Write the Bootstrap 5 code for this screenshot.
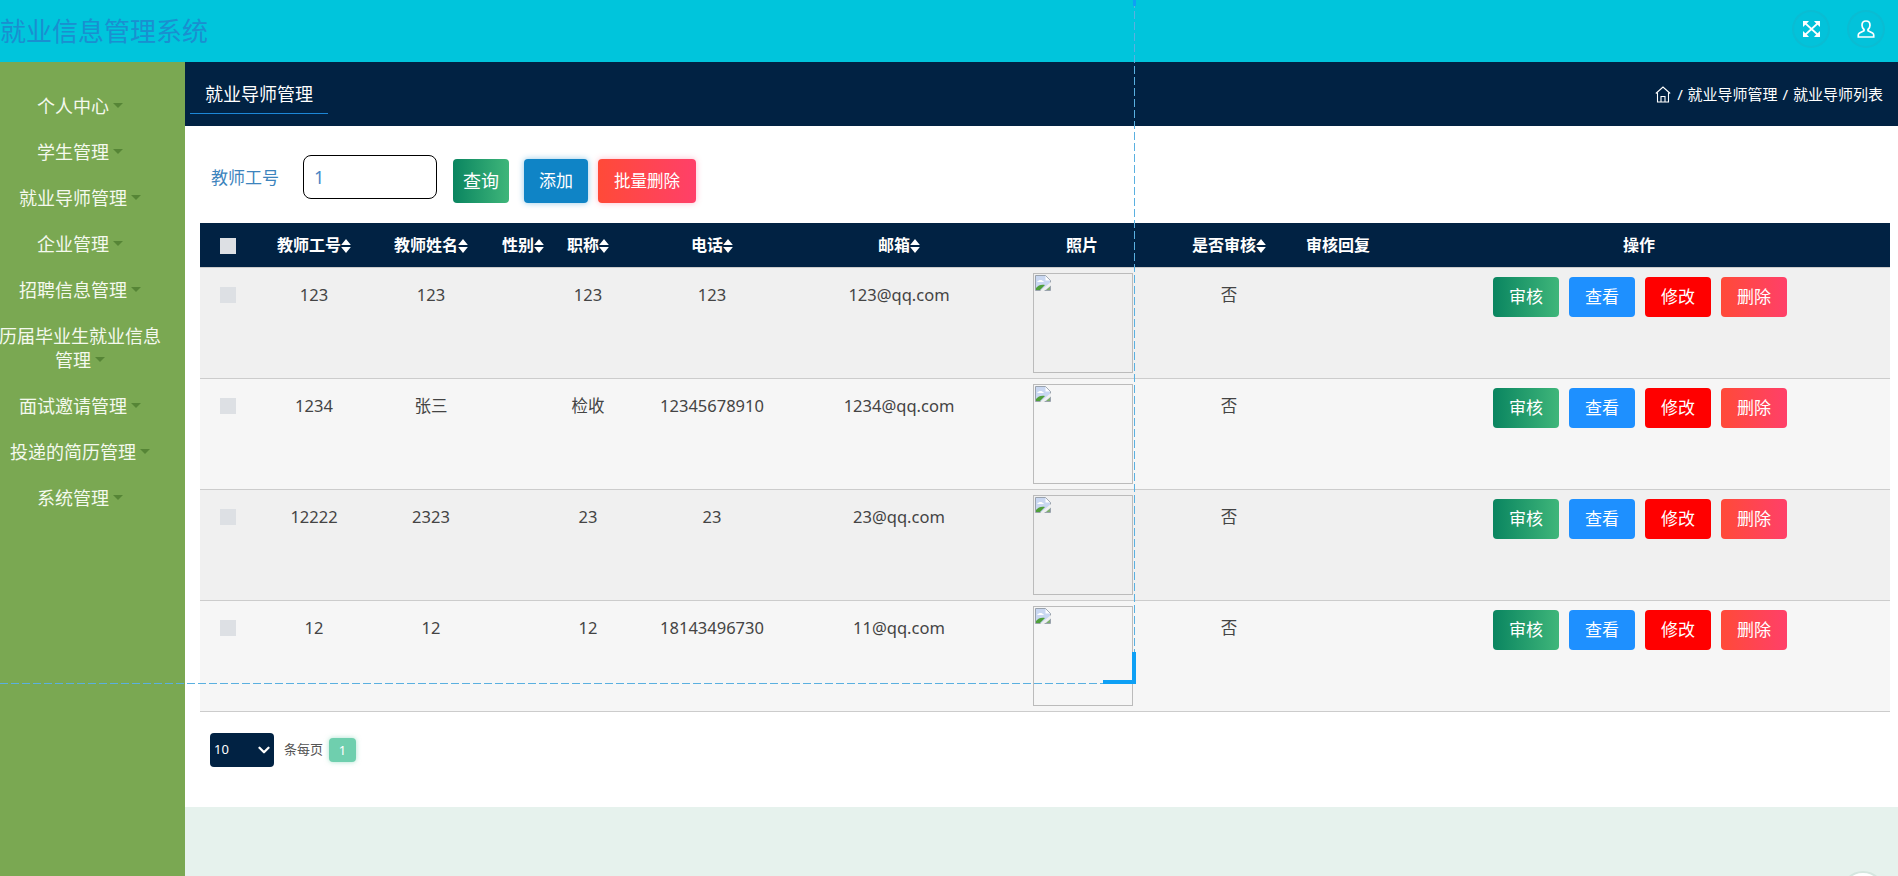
<!DOCTYPE html>
<html lang="zh-CN">
<head>
    <meta charset="UTF-8">
    <meta name="viewport" content="width=device-width, initial-scale=1.0">
    <title>就业信息管理系统</title>
    <link rel="stylesheet" href="https://cdn.jsdelivr.net/npm/bootstrap@5.3.0/dist/css/bootstrap.min.css">
    <style>
        html, body { height: 100%; overflow: hidden; }
        body { font-family: "Noto Sans", "Noto Sans CJK SC", sans-serif; background: #e6f2ed; color: #444; }

        .top-bar { height: 62px; background: #00c5dc; }
        .sys-title { font-size: 26px; line-height: 62px; color: #1a8fd0; white-space: nowrap; }
        .round-icon { width: 34px; height: 34px; border-radius: 50%; background: #03c2da; box-shadow: 0 0 0 2px #0abcd3; }
        .top-icons { gap: 21px; padding-right: 15px; margin-top: -4px; }

        .main-area { height: 814px; }
        .side-menu { width: 185px; background: #7aa852; padding-top: 21px; }
        .side-menu .nav-link { width: 162px; margin-left: -1px; padding: 11px 0; font-size: 18px; line-height: 24px; color: #f4f9ee; text-align: center; white-space: normal; }
        .side-menu .nav-link::after { color: #568536; margin-left: 4px; }

        .sub-bar { height: 64px; background: #012243; color: #fff; padding-left: 5px; padding-right: 15px; }
        .tab-name { width: 138px; height: 52px; line-height: 64px; font-size: 18px; padding-left: 15px; border-bottom: 1px solid #1c86d6; }
        .crumbs { font-size: 15px; gap: 6px; word-spacing: 1px; }

        .white-panel { height: 681px; background: #fff; padding: 29px 8px 0 15px; }
        .search-row { height: 68px; }
        .search-label { font-size: 17px; color: #3d84bd; width: 103px; padding-left: 11px; margin-top: 10px; flex-shrink: 0; }
        .search-input { width: 134px; height: 44px; border: 1px solid #000; border-radius: 8px; font-size: 18px; color: #4a86c5; padding: 0 10px; }
        .search-input:focus { border-color: #000; box-shadow: none; color: #4a86c5; }
        .act-btn { height: 44px; padding: 0; border: 0; border-radius: 4px; color: #fff; margin-top: 4px; }
        .act-btn:hover { color: #fff; }
        .green-grad { background: linear-gradient(90deg, #0a8560, #3fb67a); }
        .blue-solid { background: #1e90ff; }
        .red-solid { background: #f00; }
        .coral-grad { background: linear-gradient(90deg, #ff4a38, #ff4069); }
        .btn-query { width: 56px; font-size: 18px; margin-left: 16px; }
        .btn-add { width: 64px; font-size: 17px; margin-left: 15px; background: #0f84c6; box-shadow: 0 0 6px rgba(15,132,198,.45); }
        .btn-batch { width: 98px; font-size: 16.5px; margin-left: 10px; box-shadow: 0 0 6px rgba(255,64,105,.35); }

        .teacher-table { table-layout: fixed; width: 1690px; margin: 0; --bs-table-bg: transparent; }
        .teacher-table th { height: 44px; padding: 0; background: #012243; color: #fff; font-size: 16px; font-weight: 700; text-align: center; vertical-align: middle; border-bottom: 1px solid #ccc; white-space: nowrap; }
        .teacher-table td { height: 111px; padding: 0; font-size: 16px; color: #444; text-align: center; vertical-align: top; border-bottom: 1px solid #ccc; }
        .teacher-table tbody tr:nth-child(odd) td { background: #f0f0f0; }
        .teacher-table tbody tr:nth-child(even) td { background: #f6f6f6; }
        .cell-text { display: block; padding-top: 15px; line-height: 24px; font-size: 16.5px; }
        .fake-check { display: inline-block; width: 16px; height: 16px; background: #dde0e4; }
        th .fake-check { vertical-align: middle; }
        td .fake-check { margin-top: 19px; }
        .sort-mark { width: 10px; height: 14px; vertical-align: -2px; }
        .photo-box { display: block; width: 100px; height: 100px; margin: 5px 0 0 39px; border: 1px solid #bbb; text-align: left; padding: 1px; line-height: 0; }
        .row-btns { display: flex; gap: 10px; padding: 9px 0 0 105px; }
        .row-btn { width: 66px; height: 40px; padding: 0; font-size: 17px; line-height: 40px; border: 0; border-radius: 4px; color: #fff; }
        .row-btn:hover { color: #fff; }

        .pager-row { margin-left: 10px; margin-top: 21px; font-size: 13px; }
        .page-size { width: 64px; height: 34px; padding: 0 0 0 4px; font-size: 13px; color: #fff; border: 0; border-radius: 4px;
            background-color: #012243; background-size: 12px;
            background-image: url("data:image/svg+xml,%3csvg xmlns='http://www.w3.org/2000/svg' viewBox='0 0 16 16'%3e%3cpath fill='none' stroke='%23fff' stroke-linecap='round' stroke-linejoin='round' stroke-width='3' d='m2 5 6 6 6-6'/%3e%3c/svg%3e");
            background-position: right 4px center; }
        .per-page { color: #555; margin-left: 10px; margin-right: 6px; }
        .page-one { width: 27px; height: 24px; line-height: 24px; text-align: center; color: #fff; background: #6fcfae; border-radius: 4px; box-shadow: 0 0 5px rgba(111,207,174,.6); }

        .guide-v { position: absolute; left: 1134px; top: 0; width: 1px; height: 684px; background: repeating-linear-gradient(180deg, #5ab0e0 0 8px, transparent 8px 11px); }
        .guide-h { position: absolute; left: 0; top: 683px; width: 1135px; height: 1px; background: repeating-linear-gradient(90deg, #5ab0e0 0 8px, transparent 8px 11px); }
        .guide-cap-v { position: absolute; left: 1132px; top: 652px; width: 4px; height: 32px; background: #0ea0f5; }
        .guide-cap-h { position: absolute; left: 1103px; top: 680px; width: 33px; height: 4px; background: #0ea0f5; }
        .guide-cap-top { position: absolute; left: 1133px; top: 0; width: 3px; height: 6px; background: #0ea0f5; }
        .back-top { position: absolute; left: 1841px; top: 871px; width: 44px; height: 44px; border-radius: 50%; background: #fff; border: 2px solid #d5e6df; }

        .teacher-table col.c1 { width: 56px; }
        .teacher-table col.c2 { width: 116px; }
        .teacher-table col.c3 { width: 118px; }
        .teacher-table col.c4 { width: 66px; }
        .teacher-table col.c5 { width: 64px; }
        .teacher-table col.c6 { width: 184px; }
        .teacher-table col.c7 { width: 190px; }
        .teacher-table col.c8 { width: 176px; }
        .teacher-table col.c9 { width: 118px; }
        .teacher-table col.c10 { width: 100px; }
        .teacher-table col.c11 { width: 502px; }
    </style>
</head>
<body>
    <svg class="d-none">
        <symbol id="sort" viewBox="0 0 9 13"><path fill="#fff" d="M4.5 0 9 5.5H0zM0 7.5h9L4.5 13z"/></symbol>
        <symbol id="broken" viewBox="0 0 16 16">
            <path fill="#c9d7f1" stroke="#9aa3ad" d="M.5.5h10l5 5v10H.5z"/>
            <path fill="#fff" d="M10.500 1v4.500H15zM3 6c1-1.500 4-1.500 5 0 1 .3 1 1 0 1H3C2 7 2 6.300 3 6z"/>
            <path fill="#4f9f3a" d="M1 15v-2c2-3 6-4 9-3l-5 5z"/>
            <path fill="#f0f0f0" d="M16 7 5 16h4l7-5.500z"/>
            <path fill="#7fae6b" d="M11 15l4-3.500V15z"/>
        </symbol>
    </svg>

    <div class="top-bar d-flex justify-content-between align-items-center">
        <div class="sys-title">就业信息管理系统</div>
        <div class="top-icons d-flex">
            <span class="round-icon d-flex align-items-center justify-content-center">
                <svg width="17" height="16" viewBox="0 0 17 16" fill="none"><path stroke="#fff" stroke-width="1.700" d="M2.500 2.500l12 11M14.500 2.500l-12 11"/><path fill="#fff" d="M0 0h6L4.500 1.800 1.800 4.300 0 6zM17 0h-6l1.500 1.800 2.700 2.500L17 6zM0 16h6l-1.500-1.800-2.700-2.500L0 10zM17 16h-6l1.500-1.800 2.700-2.500L17 10z"/></svg>
            </span>
            <span class="round-icon d-flex align-items-center justify-content-center">
                <svg width="18" height="18" viewBox="0 0 18 18" fill="none" stroke="#fff" stroke-width="1.700"><path d="M9 1c2.500 0 4 1.800 4 4.200 0 2-1 3.400-2 4.300v1.200l4.500 2.300c.8.500 1.200 1.200 1.200 2V17H1.300v-2c0-.8.400-1.500 1.200-2L7 10.700V9.500C6 8.600 5 7.200 5 5.200 5 2.800 6.500 1 9 1z"/></svg>
            </span>
        </div>
    </div>

    <div class="main-area d-flex">
        <nav class="side-menu flex-shrink-0">
            <div class="nav flex-column">
                <a class="nav-link dropdown-toggle" href="#">个人中心</a>
                <a class="nav-link dropdown-toggle" href="#">学生管理</a>
                <a class="nav-link dropdown-toggle" href="#">就业导师管理</a>
                <a class="nav-link dropdown-toggle" href="#">企业管理</a>
                <a class="nav-link dropdown-toggle" href="#">招聘信息管理</a>
                <a class="nav-link dropdown-toggle" href="#">历届毕业生就业信息管理</a>
                <a class="nav-link dropdown-toggle" href="#">面试邀请管理</a>
                <a class="nav-link dropdown-toggle" href="#">投递的简历管理</a>
                <a class="nav-link dropdown-toggle" href="#">系统管理</a>
            </div>
        </nav>

        <main class="flex-grow-1">
            <div class="sub-bar d-flex justify-content-between align-items-start">
                <div class="tab-name">就业导师管理</div>
                <div class="crumbs d-flex align-items-center h-100">
                    <svg width="16" height="17" viewBox="0 0 16 17" fill="none" stroke="#fff" stroke-width="1.100"><path d="M.8 7.500 8 1l7.200 6.500"/><path d="M2.500 6.500V16h11V6.500"/><path d="M6 16v-5.500h4V16"/></svg>
                    <span>/ 就业导师管理 / 就业导师列表</span>
                </div>
            </div>

            <div class="white-panel">
                <form class="search-row d-flex align-items-start">
                    <label class="search-label">教师工号</label>
                    <input class="form-control search-input" type="text" value="1">
                    <button type="button" class="btn act-btn green-grad btn-query">查询</button>
                    <button type="button" class="btn act-btn btn-add">添加</button>
                    <button type="button" class="btn act-btn coral-grad btn-batch">批量删除</button>
                </form>

                <table class="table teacher-table">
                    <colgroup>
                        <col class="c1"><col class="c2"><col class="c3"><col class="c4"><col class="c5"><col class="c6"><col class="c7"><col class="c8"><col class="c9"><col class="c10"><col class="c11">
                    </colgroup>
                    <thead>
                        <tr>
                            <th><span class="fake-check"></span></th>
                            <th>教师工号<svg class="sort-mark"><use href="#sort"/></svg></th>
                            <th>教师姓名<svg class="sort-mark"><use href="#sort"/></svg></th>
                            <th>性别<svg class="sort-mark"><use href="#sort"/></svg></th>
                            <th>职称<svg class="sort-mark"><use href="#sort"/></svg></th>
                            <th>电话<svg class="sort-mark"><use href="#sort"/></svg></th>
                            <th>邮箱<svg class="sort-mark"><use href="#sort"/></svg></th>
                            <th>照片</th>
                            <th>是否审核<svg class="sort-mark"><use href="#sort"/></svg></th>
                            <th>审核回复</th>
                            <th>操作</th>
                        </tr>
                    </thead>
                    <tbody id="rows"></tbody>
                </table>

                <div class="pager-row d-flex align-items-center">
                    <select class="form-select page-size"><option>10</option></select>
                    <span class="per-page">条每页</span>
                    <span class="page-one">1</span>
                </div>
            </div>
        </main>
    </div>

    <div class="guide-v"></div>
    <div class="guide-h"></div>
    <div class="guide-cap-v"></div>
    <div class="guide-cap-h"></div>
    <div class="guide-cap-top"></div>
    <div class="back-top"></div>

    <script>
        let teachers = [
            ["123", "123", "123", "123", "123@qq.com"],
            ["1234", "张三", "检收", "12345678910", "1234@qq.com"],
            ["12222", "2323", "23", "23", "23@qq.com"],
            ["12", "12", "12", "18143496730", "11@qq.com"]
        ];
        let html = "";
        teachers.forEach(t => {
            html += `<tr>
                <td><span class="fake-check"></span></td>
                <td><span class="cell-text">${t[0]}</span></td>
                <td><span class="cell-text">${t[1]}</span></td>
                <td></td>
                <td><span class="cell-text">${t[2]}</span></td>
                <td><span class="cell-text">${t[3]}</span></td>
                <td><span class="cell-text">${t[4]}</span></td>
                <td><span class="photo-box"><svg width="16" height="16"><use href="#broken"/></svg></span></td>
                <td><span class="cell-text">否</span></td>
                <td></td>
                <td><div class="row-btns">
                    <button class="btn row-btn green-grad">审核</button>
                    <button class="btn row-btn blue-solid">查看</button>
                    <button class="btn row-btn red-solid">修改</button>
                    <button class="btn row-btn coral-grad">删除</button>
                </div></td>
            </tr>`;
        });
        document.getElementById("rows").innerHTML = html;
    </script>
    <script src="https://cdn.jsdelivr.net/npm/bootstrap@5.3.0/dist/js/bootstrap.bundle.min.js"></script>
</body>
</html>
